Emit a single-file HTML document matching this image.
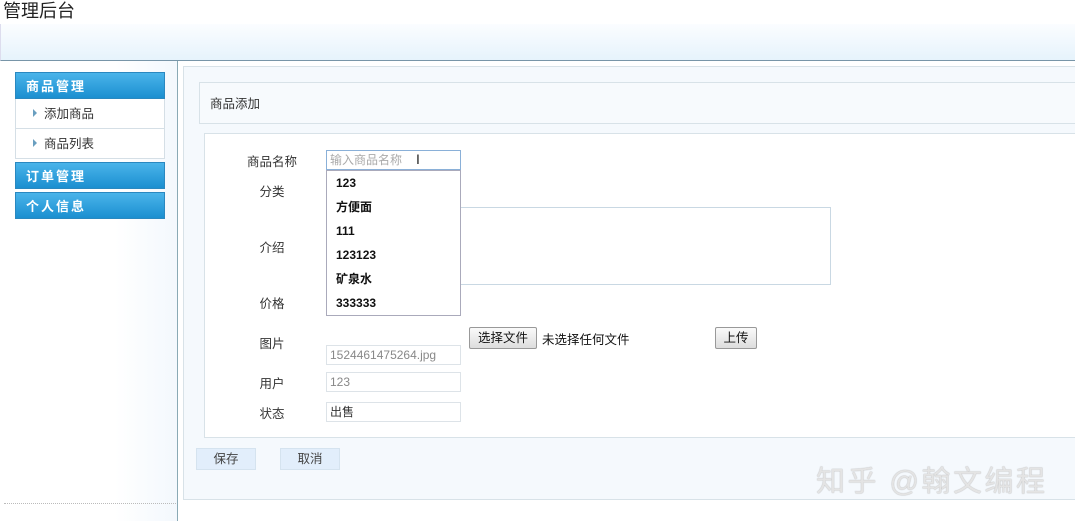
<!DOCTYPE html>
<html><head><meta charset="utf-8"><style>
*{margin:0;padding:0;box-sizing:border-box}
body{width:1075px;height:521px;overflow:hidden;background:#fff;font-family:"Liberation Sans","Noto Sans CJK SC",sans-serif;font-size:12px;color:#333;position:relative}
.a{position:absolute}
.title{left:3px;top:0;font-size:18px;color:#222;line-height:22px}
.hdr{left:0;top:24px;width:1075px;height:37px;background:linear-gradient(#fbfdff,#e6f3fc);border-bottom:1px solid #7895a8;border-left:1px solid #dde}
.side{left:0;top:61px;width:178px;height:460px;border-right:1px solid #8aa9b5;background:linear-gradient(90deg,#fff 65%,#f3f8fd)}
.dot{left:4px;top:503px;width:172px;border-top:1px dotted #bbb}
.mh{left:15px;width:150px;height:27px;background:linear-gradient(#4ab4ea,#1b8fd0);border:1px solid #2a88c0;color:#fff;font-weight:bold;font-size:13px;padding-left:10px;line-height:28px;letter-spacing:2px}
.mi{left:15px;width:150px;height:30px;border:1px solid #d5dfe6;border-top:none;background:#fff;line-height:30px;padding-left:28px;font-size:12.5px}
.mi:before{content:"";position:absolute;left:17px;top:10px;border-left:4px solid #6a9fc0;border-top:4px solid transparent;border-bottom:4px solid transparent}
.main{left:183px;top:66px;width:900px;height:434px;background:#f5f9fd;border:1px solid #d8e2e8}
.sec{left:199px;top:82px;width:880px;height:42px;border:1px solid #d8e2e8;background:#f7fafd;line-height:42px;padding-left:10px;font-size:12.5px}
.form{left:204px;top:133px;width:880px;height:305px;background:#fff;border:1px solid #d8e2e8}
.lb{width:60px;text-align:center;left:242px;font-size:12.5px}
.in{left:326px;width:135px;height:20px;border:1px solid #dde3e8;line-height:18px;padding-left:3px;font-size:12px;color:#666;background:#fff}
.dd{left:326px;top:170px;width:135px;height:146px;border:1px solid #aab;background:#fff;font-weight:bold;color:#111;font-size:12px}
.dd div{height:24px;line-height:24px;padding-left:9px}
.btn{height:22px;border:1px solid #999;background:linear-gradient(#fafafa,#ddd);border-radius:2px;line-height:20px;text-align:center;font-size:12.5px;color:#111}
.bb{top:448px;width:60px;height:22px;background:#e2eefb;border:1px solid #d5e3ef;line-height:21px;text-align:center;color:#444;font-size:12.5px}
.wm{left:816px;top:458px;font-size:29px;color:#e4e4e4;text-shadow:0 0 1px #999;letter-spacing:2.5px}
</style></head><body>
<div class="a title">管理后台</div>
<div class="a hdr"></div>
<div class="a side"></div>
<div class="a dot"></div>
<div class="a mh" style="top:72px">商品管理</div>
<div class="a mi" style="top:99px">添加商品</div>
<div class="a mi" style="top:129px">商品列表</div>
<div class="a mh" style="top:162px">订单管理</div>
<div class="a mh" style="top:192px">个人信息</div>
<div class="a main"></div>
<div class="a sec">商品添加</div>
<div class="a form"></div>
<div class="a lb" style="top:151px">商品名称</div>
<div class="a lb" style="top:181px">分类</div>
<div class="a lb" style="top:237px">介绍</div>
<div class="a lb" style="top:293px">价格</div>
<div class="a lb" style="top:333px">图片</div>
<div class="a lb" style="top:373px">用户</div>
<div class="a lb" style="top:403px">状态</div>
<div class="a in" style="top:150px;border-color:#8ab0d8;color:#aaa">输入商品名称</div>
<div class="a" style="left:416px;top:151px;font-size:14px;color:#222">I</div>
<div class="a" style="left:326px;top:207px;width:505px;height:78px;border:1px solid #c9d8e3;background:#fff"></div>
<div class="a dd"><div>123</div><div>方便面</div><div>111</div><div>123123</div><div>矿泉水</div><div>333333</div></div>
<div class="a btn" style="left:469px;top:327px;width:68px">选择文件</div>
<div class="a" style="left:542px;top:329px;font-size:12.5px;color:#111">未选择任何文件</div>
<div class="a btn" style="left:715px;top:327px;width:42px">上传</div>
<div class="a in" style="top:345px;color:#888">1524461475264.jpg</div>
<div class="a in" style="top:372px;color:#888">123</div>
<div class="a in" style="top:402px;color:#333">出售</div>
<div class="a bb" style="left:196px">保存</div>
<div class="a bb" style="left:280px">取消</div>
<div class="a wm">知乎 @翰文编程</div>
</body></html>
